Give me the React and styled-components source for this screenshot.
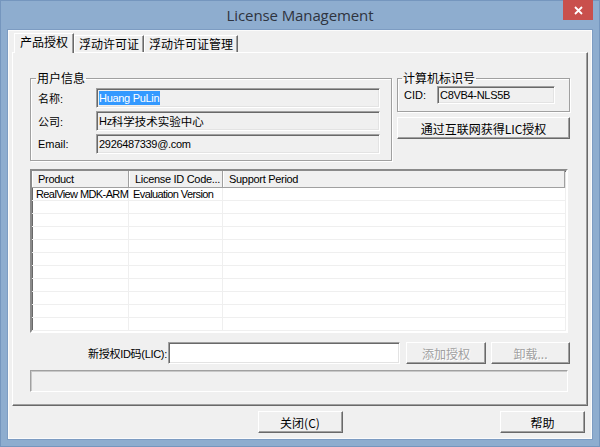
import React from 'react';
import styled, { createGlobalStyle } from 'styled-components';

const CJK = `"Noto Sans CJK SC", "Liberation Sans", sans-serif`;
const LATIN = `"Liberation Sans", "Noto Sans CJK SC", sans-serif`;

const Global = createGlobalStyle`
  html, body { margin: 0; padding: 0; }
  body { width: 600px; height: 447px; overflow: hidden; font-family: ${LATIN}; }
  *, *::before, *::after { box-sizing: border-box; }
`;

const Window = styled.div`
  width: 600px;
  height: 447px;
  background: #8eadcf;
  display: flex;
  flex-direction: column;
  box-shadow: inset 0 0 0 1px #7596be;
`;

const TitleBar = styled.div`
  flex: none;
  height: 30px;
  display: grid;
  grid-template-columns: 1fr auto 1fr;
`;

const Title = styled.div`
  grid-column: 2;
  align-self: center;
  font: 15px "Open Sans", sans-serif;
  letter-spacing: -0.1px;
  color: #2e3440;
  padding-bottom: 1px;
`;

const CloseBtn = styled.div`
  grid-column: 3;
  justify-self: end;
  align-self: start;
  width: 30px;
  height: 20px;
  margin-right: 7px;
  background: #c9504c;
  display: flex;
  align-items: center;
  justify-content: center;
`;

const Client = styled.div`
  flex: 1;
  margin: 0 8px 8px;
  background: #f0f0f0;
  display: flex;
  flex-direction: column;
  padding: 4px 4px 6px;
  box-shadow: 0 0 0 1px #7d9cc2, inset 0 0 0 1px #fbfbfb;
`;

const TabStrip = styled.div`
  flex: none;
  height: 18px;
  display: flex;
  align-items: flex-end;
  padding-left: 2px;
  position: relative;
  z-index: 1;
`;

const Tab = styled.div`
  height: ${(p) => (p.$active ? 20 : 17)}px;
  margin-bottom: ${(p) => (p.$active ? -1 : 0)}px;
  padding: 0 ${(p) => (p.$active ? 5 : 4)}px;
  background: #f0f0f0;
  border-top: 1px solid #fff;
  border-left: 1px solid #fff;
  border-right: 1px solid #696969;
  box-shadow: inset -1px 0 0 #a0a0a0;
  font: 12px/16px ${CJK};
  color: #000;
  white-space: nowrap;
`;

const Panel = styled.div`
  flex: 1;
  border: 1px solid;
  border-color: #fff #696969 #696969 #fff;
  box-shadow: inset -1px -1px 0 #a0a0a0;
  padding: 18px 17px 13px 17px;
  display: flex;
  flex-direction: column;
`;

const TopRow = styled.div`
  display: grid;
  grid-template-columns: 362px 173px;
  column-gap: 5px;
  align-items: start;
`;

const Group = styled.fieldset`
  margin: 0;
  min-width: 0;
  border: 1px solid #a0a0a0;
  box-shadow: inset 1px 1px 0 #fff, 1px 1px 0 #fff;
  padding: ${(p) => p.$pad};
`;

const Legend = styled.legend`
  font: 12px/14px ${CJK};
  color: #000;
  padding: 0 1px;
  margin-left: -2px;
`;

const FormGrid = styled.div`
  display: grid;
  grid-template-columns: ${(p) => p.$labelW}px 1fr;
  row-gap: 3px;
  align-items: center;
`;

const Label = styled.div`
  font: 11px ${LATIN};
  color: #000;
  white-space: nowrap;
`;

const Field = styled.div`
  height: ${(p) => p.$h || 20}px;
  background: ${(p) => (p.$white ? '#fff' : '#f0f0f0')};
  border: 1px solid;
  border-color: #a0a0a0 #fff #fff #a0a0a0;
  box-shadow: inset 1px 1px 0 #696969, inset -1px -1px 0 #e3e3e3;
  padding: 0 1px 0 2px;
  display: flex;
  align-items: center;
  font: 11px ${LATIN};
  letter-spacing: -0.3px;
  color: #000;
  white-space: nowrap;
  overflow: hidden;
`;

const CjkText = styled.span`
  letter-spacing: 0;
  font-size: 11.5px;
`;

const Selected = styled.span`
  background: #3399ff;
  color: #fff;
  line-height: 14px;
  padding-right: 1px;
`;

const RightCol = styled.div`
  display: flex;
  flex-direction: column;
  gap: 5px;
`;

const Btn = styled.button`
  height: ${(p) => p.$h || 22}px;
  width: ${(p) => (p.$w ? `${p.$w}px` : 'auto')};
  margin: 0 ${(p) => p.$mr || 0}px 0 ${(p) => p.$ml || 0}px;
  padding: 0;
  background: #f0f0f0;
  border: 1px solid;
  border-color: #fff #696969 #696969 #fff;
  box-shadow: inset -1px -1px 0 #a0a0a0;
  font: 12px ${CJK};
  color: ${(p) => (p.disabled ? '#a0a0a0' : '#000')};
  text-shadow: ${(p) => (p.disabled ? '1px 1px 0 #fff' : 'none')};
  white-space: nowrap;
`;

const List = styled.div`
  margin-top: 8px;
  margin-right: 2px;
  height: 164px;
  border: 2px solid;
  border-color: #8a8a8a #ffffff #ffffff #8a8a8a;
  box-shadow: inset 1px 1px 0 #696969, inset -1px -1px 0 #e3e3e3;
  background: #fff;
  overflow: hidden;
`;

const Cols = styled.div`
  display: grid;
  grid-template-columns: 97px 94px 1fr;
`;

const Header = styled(Cols)`
  height: 17px;
  background: #f0f0f0;
  border-bottom: 1px solid #a0a0a0;
  margin-right: 1px;
`;

const HeaderCell = styled.div`
  border-right: 1px solid #a0a0a0;
  box-shadow: inset 1px 0 0 #fff;
  padding-left: 6px;
  font: 11px/16px ${LATIN};
  letter-spacing: -0.3px;
  color: #000;
  white-space: nowrap;
  overflow: hidden;
`;

const Row = styled(Cols)`
  height: 13px;
`;

const Cell = styled.div`
  border-right: 1px solid #efefef;
  border-bottom: 1px solid #efefef;
  padding-left: 4px;
  font: 11px/12px ${LATIN};
  letter-spacing: -0.6px;
  color: #000;
  white-space: nowrap;
  overflow: visible;
`;

const LicRow = styled.div`
  margin-top: 9px;
  display: flex;
  align-items: center;
  height: 22px;
`;

const LicLabel = styled.div`
  width: 138px;
  padding-right: 1px;
  text-align: right;
  font: 11px ${LATIN};
  letter-spacing: -0.3px;
  color: #000;
  white-space: nowrap;
`;

const LicInput = styled(Field)`
  width: 232px;
  flex: none;
`;

const StatusBar = styled.div`
  margin-top: 6px;
  margin-right: 2px;
  height: 22px;
  border: 1px solid;
  border-color: #a0a0a0 #fff #fff #a0a0a0;
  box-shadow: inset 1px 1px 0 #c8c8c8;
`;

const BottomRow = styled.div`
  flex: none;
  margin-top: 5px;
  display: grid;
  grid-template-columns: 1fr auto 1fr;
`;

const rows = [
  ['RealView MDK-ARM', 'Evaluation Version', ''],
  ...Array.from({ length: 10 }, () => ['', '', '']),
];

export default function App() {
  return (
    <>
      <Global />
      <Window>
        <TitleBar>
          <Title>License Management</Title>
          <CloseBtn>
            <svg width="9" height="9" viewBox="0 0 9 9">
              <path d="M1 1 L8 8 M8 1 L1 8" stroke="#fff" strokeWidth="1.8" />
            </svg>
          </CloseBtn>
        </TitleBar>
        <Client>
          <TabStrip>
            <Tab $active>产品授权</Tab>
            <Tab>浮动许可证</Tab>
            <Tab>浮动许可证管理</Tab>
          </TabStrip>
          <Panel>
            <TopRow>
              <Group $pad="3px 11px 6px 7px">
                <Legend>用户信息</Legend>
                <FormGrid $labelW={58}>
                  <Label>名称:</Label>
                  <Field>
                    <Selected>Huang PuLin</Selected>
                  </Field>
                  <Label>公司:</Label>
                  <Field>
                    Hz<CjkText>科学技术实验中心</CjkText>
                  </Field>
                  <Label>Email:</Label>
                  <Field>2926487339@.com</Field>
                </FormGrid>
              </Group>
              <RightCol>
                <Group $pad="1px 14px 7px 6px">
                  <Legend>计算机标识号</Legend>
                  <FormGrid $labelW={33}>
                    <Label>CID:</Label>
                    <Field $h={18}>C8VB4-NLS5B</Field>
                  </FormGrid>
                </Group>
                <Btn>通过互联网获得LIC授权</Btn>
              </RightCol>
            </TopRow>
            <List>
              <Header>
                <HeaderCell>Product</HeaderCell>
                <HeaderCell>License ID Code...</HeaderCell>
                <HeaderCell>Support Period</HeaderCell>
              </Header>
              {rows.map((r, i) => (
                <Row key={i}>
                  {r.map((c, j) => (
                    <Cell key={j}>{c}</Cell>
                  ))}
                </Row>
              ))}
            </List>
            <LicRow>
              <LicLabel>新授权ID码(LIC):</LicLabel>
              <LicInput $white $h={22} />
              <Btn disabled $w={80} $ml={6}>添加授权</Btn>
              <Btn disabled $w={79} $ml={5}>卸载...</Btn>
            </LicRow>
            <StatusBar />
          </Panel>
          <BottomRow>
            <Btn style={{ gridColumn: 2 }} $w={85}>关闭(C)</Btn>
            <Btn style={{ gridColumn: 3, justifySelf: 'end' }} $w={85} $mr={3}>帮助</Btn>
          </BottomRow>
        </Client>
      </Window>
    </>
  );
}
